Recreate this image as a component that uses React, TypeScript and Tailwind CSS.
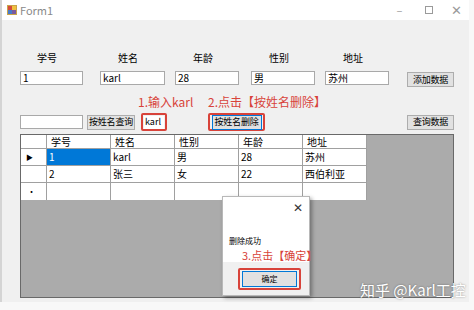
import React from "react";

const font = { fontFamily: '"Noto Sans CJK SC", "Microsoft YaHei", sans-serif' };

const heads = ["学号", "姓名", "性别", "年龄", "地址"];
const rows = [
  ["1", "karl", "男", "28", "苏州"],
  ["2", "张三", "女", "22", "西伯利亚"],
];

function TextBox({ w, value }: { w: string; value?: string }) {
  return (
    <div
      className={`${w} h-[14px] bg-white border border-[#a9a9a9] pl-[2px] text-[10px] leading-[12px] text-black whitespace-nowrap overflow-hidden`}
    >
      {value}
    </div>
  );
}

function Btn({ label, w, focus }: { label: string; w: string; focus?: boolean }) {
  return (
    <div
      className={`${w} h-[15px] flex items-center justify-center text-[9px] tracking-[-0.2px] whitespace-nowrap text-black bg-[#e1e1e1] border ${
        focus ? "border-[#0078d7]" : "border-[#adadad]"
      }`}
    >
      {label}
    </div>
  );
}

export default function App() {
  return (
    <div className="relative w-[474px] h-[310px] overflow-hidden bg-[#f8f8f8]" style={font}>
      <div className="flex flex-col w-[469px] h-[302px] bg-[#f0f0f0] border-l-2 border-[#d4d4d4]">
        {/* title bar */}
        <div className="h-[20px] bg-white flex items-center pl-[5px] text-[11px] text-[#8a8a8a]">
          <svg width="10" height="10" viewBox="0 0 10 10" className="mr-[3px]">
            <rect x="0" y="0" width="10" height="10" fill="#c9a44a" />
            <rect x="1" y="1" width="4" height="4" fill="#d44a3a" />
            <rect x="5" y="1" width="4" height="4" fill="#f0c040" />
            <rect x="1" y="5" width="4" height="4" fill="#4a7ac9" />
            <rect x="5" y="5" width="4" height="4" fill="#7a5aa0" />
          </svg>
          <span>Form1</span>
          <div className="ml-auto flex items-center text-[#9a9a9a]">
            <span className="w-[31px] text-center">–</span>
            <span className="w-[28px] flex justify-center">
              <span className="w-[8px] h-[8px] border border-[#9a9a9a]" />
            </span>
            <span className="w-[26px] text-center text-[13px]">✕</span>
          </div>
        </div>

        {/* labels */}
        <div className="flex pl-[35px] mt-[30px] h-[14px] items-center text-[10px] text-black">
          <span className="w-[81px]">学号</span>
          <span className="w-[75px]">姓名</span>
          <span className="w-[76px]">年龄</span>
          <span className="w-[74px]">性别</span>
          <span>地址</span>
        </div>

        {/* inputs */}
        <div className="flex items-start pl-[18px] mt-[7px]">
          <TextBox w="w-[63px]" value="1" />
          <div className="ml-[17px]"><TextBox w="w-[65px]" value="karl" /></div>
          <div className="ml-[10px]"><TextBox w="w-[64px]" value="28" /></div>
          <div className="ml-[12px]"><TextBox w="w-[64px]" value="男" /></div>
          <div className="ml-[10px]"><TextBox w="w-[64px]" value="苏州" /></div>
          <div className="ml-[18px] mt-[1px]"><Btn label="添加数据" w="w-[47px]" /></div>
        </div>

        {/* annotation */}
        <div className="flex pl-[136px] mt-[7px] h-[16px] items-center text-[12px] text-[#d8433a]">
          <span className="w-[70px]">1.输入karl</span>
          <span>2.点击【按姓名删除】</span>
        </div>

        {/* search row */}
        <div className="flex items-center pl-[18px] mt-[3px] h-[18px]">
          <TextBox w="w-[63px]" />
          <div className="ml-[4px]"><Btn label="按姓名查询" w="w-[48px]" /></div>
          <div className="ml-[6px] h-[18px] w-[26px] border-2 border-[#d8433a] rounded-[2px] flex items-center justify-center">
            <div className="w-[20px] h-[13px] bg-white text-[9px] leading-[12px] pl-[1px]">karl</div>
          </div>
          <div className="ml-[41px] h-[18px] w-[57px] border-2 border-[#d8433a] rounded-[2px] flex items-center justify-center">
            <Btn label="按姓名删除" w="w-[50px]" focus />
          </div>
          <div className="ml-[142px]"><Btn label="查询数据" w="w-[47px]" /></div>
        </div>

        {/* data grid */}
        <div className="ml-[18px] mt-[3px] w-[434px] h-[164px] bg-[#ababab] border border-[#696969] flex flex-col text-[10px] text-black">
          <div className="flex bg-white h-[14px] w-[346px]">
            <div className="w-[26px] border-r border-b border-[#a0a0a0]" />
            {heads.map((h, i) => (
              <div
                key={i}
                className="w-[64px] border-r border-b border-[#a0a0a0] pl-[4px] leading-[13px]"
              >
                {h}
              </div>
            ))}
          </div>
          {rows.map((r, ri) => (
            <div key={ri} className="flex bg-white h-[17px] w-[346px]">
              <div className="w-[26px] border-r border-b border-[#a0a0a0] flex items-center pl-[5px] text-[7px]">
                {ri === 0 ? "▶" : ""}
              </div>
              {r.map((c, ci) => (
                <div
                  key={ci}
                  className={`w-[64px] border-r border-b border-[#a0a0a0] pl-[2px] leading-[16px] ${
                    ri === 0 && ci === 0 ? "bg-[#0078d7] text-white" : ""
                  }`}
                >
                  {c}
                </div>
              ))}
            </div>
          ))}
          <div className="flex bg-white h-[17px] w-[346px]">
            <div className="w-[26px] border-r border-[#a0a0a0] flex items-center pl-[6px] text-[9px]">
              •
            </div>
            {heads.map((_, ci) => (
              <div key={ci} className="w-[64px] border-r border-[#a0a0a0]" />
            ))}
          </div>
        </div>
      </div>

      {/* message box */}
      <div className="absolute left-[222px] top-[196px] w-[88px] h-[100px] flex flex-col bg-white border border-[#b8b8b8] shadow-[2px_2px_4px_rgba(0,0,0,0.35)]">
        <div className="flex justify-end pr-[6px] pt-[3px] text-[12px] text-[#333] leading-[14px]">✕</div>
        <div className="pl-[6px] mt-[22px] text-[8px] text-black leading-[10px]">删除成功</div>
        <div className="pl-[19px] mt-[2px] text-[11px] text-[#d8433a] leading-[14px] whitespace-nowrap">3.点击【确定】</div>
        <div className="mt-auto h-[34px] bg-[#f0f0f0] flex items-center pl-[15px]">
          <div className="w-[63px] h-[22px] border-2 border-[#d8433a] rounded-[2px] flex items-center justify-center">
            <div className="w-[55px] h-[16px] bg-[#e1e1e1] border border-[#0078d7] flex items-center justify-center text-[8px]">
              确定
            </div>
          </div>
        </div>
      </div>

      {/* watermark */}
      <div className="absolute left-[360px] top-[279px] text-[15px] text-white whitespace-nowrap [text-shadow:0_0_2px_rgba(0,0,0,0.45)]">
        知乎 @Karl工控
      </div>
    </div>
  );
}
